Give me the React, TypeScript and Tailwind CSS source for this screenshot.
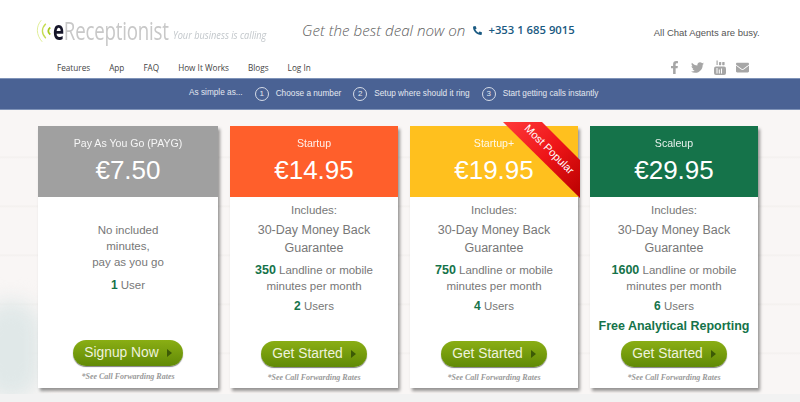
import { FaEnvelope, FaFacebookF, FaPhoneAlt, FaTwitter } from "react-icons/fa";

interface Plan {
  name: string;
  price: string;
  color: string;
  button: string;
  minutes?: string;
  users: string;
  extra?: string;
  ribbon?: boolean;
}

const plans: Plan[] = [
  { name: "Startup", price: "€14.95", color: "bg-[#ff5f2b]", button: "Get Started", minutes: "350", users: "2 Users" },
  { name: "Startup+", price: "€19.95", color: "bg-[#ffc01e]", button: "Get Started", minutes: "750", users: "4 Users", ribbon: true },
  {
    name: "Scaleup",
    price: "€29.95",
    color: "bg-[#15734a]",
    button: "Get Started",
    minutes: "1600",
    users: "6 Users",
    extra: "Free Analytical Reporting",
  },
];

const navLinks = ["Features", "App", "FAQ", "How It Works", "Blogs", "Log In"];
const steps = ["Choose a number", "Setup where should it ring", "Start getting calls instantly"];

function Logo() {
  return (
    <div className="flex items-end">
      <svg width="18" height="28" viewBox="0 0 20 28" fill="none" className="mb-[1px] shrink-0">
        <path d="M7 2 C1 9 1 18 8 26" stroke="#dcec8c" strokeWidth="1" />
        <path d="M12 6 C7 11 7 17 12 22" stroke="#c5dc50" strokeWidth="1.5" />
        <path d="M17 10 C14 12 14 16 17 18" stroke="#a8c820" strokeWidth="2" />
      </svg>
      <span className="w-[120px] shrink-0 origin-left scale-x-[0.72] whitespace-nowrap font-['Open_Sans',sans-serif] text-[26px] leading-[32px] tracking-[-0.3px] text-[#c8c8c8]">
        <span className="font-bold text-[#16162a]">e</span>Receptionist
      </span>
      <span className="mb-[3px] w-[94px] shrink-0 origin-left scale-x-[0.8] whitespace-nowrap font-['Open_Sans',sans-serif] text-[11.5px] italic text-[#c2c7cb]">
        Your business is calling
      </span>
    </div>
  );
}

function YoutubeIcon() {
  return (
    <svg width="12" height="15" viewBox="0 0 12 15" fill="#a6a6a6">
      <rect x="0" y="6.5" width="12" height="8.5" rx="2" />
      <rect x="2.5" y="0.5" width="1.2" height="4.5" />
      <rect x="5" y="2" width="2.2" height="3.2" rx="0.6" />
      <rect x="8.2" y="2" width="2.4" height="3.2" rx="0.6" />
      <rect x="2.5" y="8" width="1" height="5.5" fill="#fff" />
      <rect x="4.8" y="9.5" width="1" height="4" fill="#fff" />
      <rect x="7" y="8.5" width="1" height="5" fill="#fff" />
    </svg>
  );
}

function Header() {
  return (
    <header className="h-[78px] bg-white font-['Open_Sans',sans-serif]">
      <div className="flex h-[46px] items-center pl-[35px] pt-[14px]">
        <div className="w-[267px] shrink-0">
          <Logo />
        </div>
        <p className="whitespace-nowrap text-[15.2px] font-light italic text-[#5e5e5e]">Get the best deal now on</p>
        <FaPhoneAlt className="ml-[8px] text-[9px] text-[#1a5a82]" />
        <p className="ml-[6px] whitespace-nowrap text-[11.3px] font-semibold text-[#1a5a82]">+353 1 685 9015</p>
        <p className="ml-[79px] whitespace-nowrap pt-[6px] font-['Liberation_Sans',sans-serif] text-[9.5px] text-[#555]">
          All Chat Agents are busy.
        </p>
      </div>
      <div className="flex h-[32px] items-center justify-between pl-[57px] pr-[51px]">
        <nav className="flex gap-[19px] pt-[12px] text-[8.2px] text-[#444]">
          {navLinks.map((link) => (
            <a key={link} href="#" className="whitespace-nowrap">
              {link}
            </a>
          ))}
        </nav>
        <div className="flex items-center gap-[10px] pt-[10px] text-[#a6a6a6]">
          <FaFacebookF className="text-[13px]" />
          <FaTwitter className="text-[13px]" />
          <YoutubeIcon />
          <FaEnvelope className="text-[13px]" />
        </div>
      </div>
    </header>
  );
}

function StepsBar() {
  return (
    <div className="flex h-[32px] items-center gap-[12px] border-y border-[#7f93b8] bg-[#4a6294] pl-[189px] font-['Liberation_Sans',sans-serif] text-[8.25px] text-[#e4e8f0]">
      <span className="-mt-[1px]">As simple as...</span>
      {steps.map((step, i) => (
        <div key={step} className="flex items-center gap-[7px]">
          <span className="flex h-[14px] w-[14px] items-center justify-center rounded-full border border-[#d5dbe7] text-[8px]">
            {i + 1}
          </span>
          <span className="whitespace-nowrap">{step}</span>
        </div>
      ))}
    </div>
  );
}

function Arrow() {
  return <span className="ml-[8px] h-0 w-0 border-y-[4.5px] border-l-[5px] border-y-transparent border-l-[#3c5a06]" />;
}

function CtaButton({ label }: { label: string }) {
  return (
    <a
      href="#"
      className="flex h-[26px] items-center rounded-full bg-gradient-to-b from-[#8aae14] to-[#618a06] px-[11.5px] text-[13.8px] text-[#eef2dc] shadow-[0_1px_1px_rgba(0,0,0,0.5)]"
    >
      {label}
      <Arrow />
    </a>
  );
}

function Ribbon() {
  return (
    <div className="absolute -right-[2px] -top-[4px] h-[76px] w-[77px]">
      <svg width="77" height="76" viewBox="0 0 77 76" className="absolute inset-0">
        <defs>
          <linearGradient id="ribbon-red" x1="0" y1="0" x2="1" y2="1">
            <stop offset="0" stopColor="#ff3a3a" />
            <stop offset="0.5" stopColor="#ee1518" />
            <stop offset="1" stopColor="#b80000" />
          </linearGradient>
        </defs>
        <polygon points="0,0 39,0 77,38 77,76" fill="url(#ribbon-red)" />
      </svg>
      <span className="absolute left-[8px] top-[20px] w-[77px] rotate-45 whitespace-nowrap text-center text-[11px] leading-[14px] text-white">
        Most Popular
      </span>
    </div>
  );
}

function PriceHead({ name, price, color, ribbon }: { name: string; price: string; color: string; ribbon?: boolean }) {
  return (
    <div className={`relative flex h-[71px] shrink-0 flex-col items-center pt-[10px] text-white ${color}`}>
      <p className="text-[10.6px] leading-[14px] opacity-90">{name}</p>
      <p className="mt-[4px] text-[26px] leading-[32px]">{price}</p>
      {ribbon && <Ribbon />}
    </div>
  );
}

function Footnote() {
  return (
    <p className="mt-[6px] font-['Liberation_Serif',serif] text-[8px] font-bold italic leading-[10px] text-[#999]">
      *See Call Forwarding Rates
    </p>
  );
}

function PaygCard() {
  return (
    <div className="flex h-[262px] w-[180px] flex-col bg-white shadow-[2px_3px_3px_rgba(0,0,0,0.4)]">
      <PriceHead name="Pay As You Go (PAYG)" price="€7.50" color="bg-[#a0a0a0]" />
      <div className="flex flex-1 flex-col items-center text-[11.5px] text-[#777]">
        <div className="mt-[25px] text-center leading-[16px]">
          <p>No included</p>
          <p>minutes,</p>
          <p>pay as you go</p>
        </div>
        <p className="mt-[7px] leading-[16px]">
          <b className="text-[12px] text-[#15734a]">1</b> User
        </p>
        <div className="mt-auto flex flex-col items-center pb-[6px]">
          <CtaButton label="Signup Now" />
          <Footnote />
        </div>
      </div>
    </div>
  );
}

function PlanCard({ plan }: { plan: Plan }) {
  const [count, ...rest] = plan.users.split(" ");
  return (
    <div className="flex h-[262px] w-[168px] flex-col bg-white shadow-[2px_3px_3px_rgba(0,0,0,0.4)]">
      <PriceHead name={plan.name} price={plan.price} color={plan.color} ribbon={plan.ribbon} />
      <div className="flex flex-1 flex-col items-center text-[#777]">
        <p className="mt-[6px] text-[11.5px] leading-[14px]">Includes:</p>
        <p className="mt-[5px] px-[10px] text-center text-[12.5px] leading-[17.5px]">30-Day Money Back Guarantee</p>
        <p className="mt-[5px] whitespace-nowrap text-center text-[11.5px] leading-[16px]">
          <b className="text-[12.5px] text-[#15734a]">{plan.minutes}</b> Landline or mobile
          <br />
          minutes per month
        </p>
        <p className="mt-[4px] text-[11.5px] leading-[16px]">
          <b className="text-[12px] text-[#15734a]">{count}</b> {rest.join(" ")}
        </p>
        {plan.extra && (
          <p className="mt-[4px] whitespace-nowrap text-[12.5px] font-bold leading-[16px] text-[#15734a]">{plan.extra}</p>
        )}
        <div className="mt-auto flex flex-col items-center pb-[5px]">
          <CtaButton label={plan.button} />
          <Footnote />
        </div>
      </div>
    </div>
  );
}

export default function App() {
  return (
    <div className="h-[402px] w-[800px] overflow-hidden bg-[#f2f2f2] font-['Liberation_Sans',sans-serif]">
      <Header />
      <StepsBar />
      <main className="relative flex h-[284px] gap-[12px] overflow-hidden bg-[#f9f6f5] bg-[repeating-linear-gradient(180deg,transparent_0,transparent_46px,#f3f0ee_47px,transparent_49px)] pl-[38px] pt-[16px]">
        <div className="absolute -left-[20px] top-[190px] h-[100px] w-[62px] rounded-full bg-[#e0e8e8] blur-[10px]" />
        <div className="relative flex gap-[12px]">
          <PaygCard />
          {plans.map((plan) => (
            <PlanCard key={plan.name} plan={plan} />
          ))}
        </div>
      </main>
    </div>
  );
}
